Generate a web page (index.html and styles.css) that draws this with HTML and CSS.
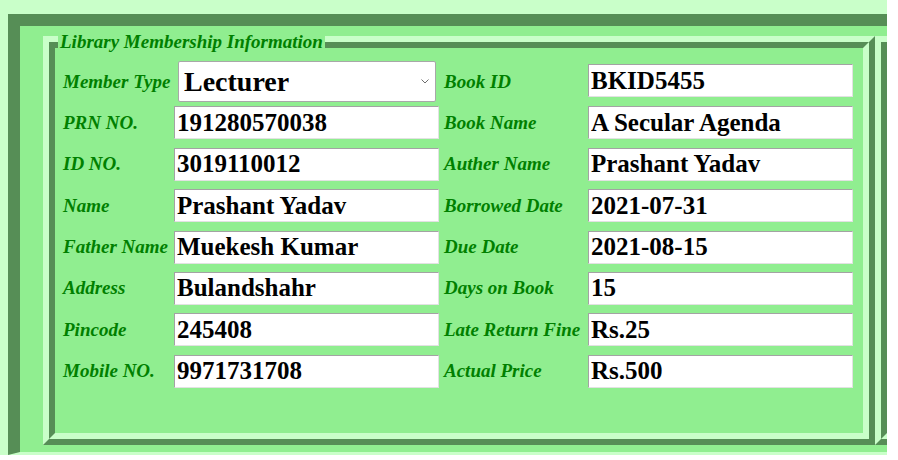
FILE: index.html
```html
<!DOCTYPE html>
<html lang="en">
<head>
<meta charset="utf-8">
<title>Library Membership Information</title>
<link rel="stylesheet" href="styles.css">
</head>
<body>
<div class="window">
  <div class="frame">
    <section class="group">
      <div class="group-inner">
        <div class="grid">
          <label class="lbl row1">Member Type</label>
          <div class="combo">
            <span class="combo-text">Lecturer</span>
            <svg class="chev" width="8" height="5" viewBox="0 0 8 5"><polyline points="0.5,0.5 4,4 7.5,0.5" fill="none" stroke="#6d6d6d" stroke-width="1"/></svg>
          </div>
          <label class="lbl lbl-r row1">Book ID</label>
          <input class="field field-first" type="text" value="BKID5455" readonly>

          <label class="lbl">PRN NO.</label>
          <input class="field" type="text" value="191280570038" readonly>
          <label class="lbl lbl-r">Book Name</label>
          <input class="field" type="text" value="A Secular Agenda" readonly>

          <label class="lbl">ID NO.</label>
          <input class="field" type="text" value="3019110012" readonly>
          <label class="lbl lbl-r">Auther Name</label>
          <input class="field" type="text" value="Prashant Yadav" readonly>

          <label class="lbl">Name</label>
          <input class="field" type="text" value="Prashant Yadav" readonly>
          <label class="lbl lbl-r">Borrowed Date</label>
          <input class="field" type="text" value="2021-07-31" readonly>

          <label class="lbl">Father Name</label>
          <input class="field" type="text" value="Muekesh Kumar" readonly>
          <label class="lbl lbl-r">Due Date</label>
          <input class="field" type="text" value="2021-08-15" readonly>

          <label class="lbl">Address</label>
          <input class="field" type="text" value="Bulandshahr" readonly>
          <label class="lbl lbl-r">Days on Book</label>
          <input class="field" type="text" value="15" readonly>

          <label class="lbl">Pincode</label>
          <input class="field" type="text" value="245408" readonly>
          <label class="lbl lbl-r">Late Return Fine</label>
          <input class="field" type="text" value="Rs.25" readonly>

          <label class="lbl">Mobile NO.</label>
          <input class="field" type="text" value="9971731708" readonly>
          <label class="lbl lbl-r">Actual Price</label>
          <input class="field" type="text" value="Rs.500" readonly>
        </div>
      </div>
      <div class="legend">Library Membership Information</div>
    </section>
    <div class="side"><div class="side-inner"></div></div>
  </div>
</div>
</body>
</html>
```

FILE: styles.css
```css
html, body {
  margin: 0;
  padding: 0;
  background: #ffffff;
}

.window {
  width: 887px;
  height: 455px;
  box-sizing: border-box;
  overflow: hidden;
  background: #c9ffc9;
  padding: 14px 0 0 8px;
}

.frame {
  height: 441px;
  box-sizing: border-box;
  background: #90ee90;
  border-top: 12px solid #568e56;
  border-left: 12px solid #568e56;
  border-bottom: 3px solid #c9ffc9;
  padding: 10px 0 0 23px;
  display: flex;
  align-items: flex-start;
}

.group {
  position: relative;
  flex: 0 0 auto;
  width: 832px;
  height: 409px;
  box-sizing: border-box;
  border: 6px solid;
  border-color: #c9ffc9 #568e56 #568e56 #c9ffc9;
}

.group-inner {
  height: 100%;
  box-sizing: border-box;
  border: 6px solid;
  border-color: #568e56 #c9ffc9 #c9ffc9 #568e56;
  padding: 13px 0 0 8px;
}

.legend {
  position: absolute;
  top: -11px;
  left: 9px;
  padding: 0 2px;
  background: #90ee90;
  color: #008000;
  font: italic bold 19px/22px "Liberation Serif", "Times New Roman", serif;
  white-space: nowrap;
}

.side {
  flex: 0 0 auto;
  width: 24px;
  height: 409px;
  box-sizing: border-box;
  border: 6px solid;
  border-color: #c9ffc9 #568e56 #568e56 #c9ffc9;
}

.side-inner {
  height: 100%;
  box-sizing: border-box;
  border: 6px solid;
  border-color: #568e56 #c9ffc9 #c9ffc9 #568e56;
}

.grid {
  display: grid;
  grid-template-columns: 111px 265px 149px 265px;
  grid-template-rows: 37px repeat(7, 33px);
  row-gap: 8.4px;
}

.lbl {
  display: flex;
  align-items: center;
  height: 33px;
  color: #008000;
  font: italic bold 19px "Liberation Serif", "Times New Roman", serif;
  white-space: nowrap;
}

.lbl.row1 {
  height: 41px;
  align-self: start;
}

.lbl-r {
  padding-left: 5px;
}

.field {
  width: 265px;
  height: 33px;
  box-sizing: border-box;
  margin: 0;
  padding: 0 2px;
  border: 1px solid;
  border-color: #a3a3a3 #e2e2e2 #e2e2e2 #a3a3a3;
  border-radius: 0;
  background: #ffffff;
  color: #000000;
  font: bold 25px "Liberation Serif", "Times New Roman", serif;
  outline: none;
}

.field-first {
  align-self: start;
  margin-top: 3px;
}

.combo {
  align-self: start;
  margin-left: 4px;
  width: 258px;
  height: 41px;
  box-sizing: border-box;
  border: 1px solid #a8a8a8;
  border-radius: 2px;
  background: #ffffff;
  display: flex;
  align-items: flex-start;
  justify-content: space-between;
  padding: 0 6px 0 5px;
}

.combo-text {
  color: #000000;
  font: bold 28px/39px "Liberation Serif", "Times New Roman", serif;
  white-space: nowrap;
}

.chev {
  margin-top: 17px;
}
```
